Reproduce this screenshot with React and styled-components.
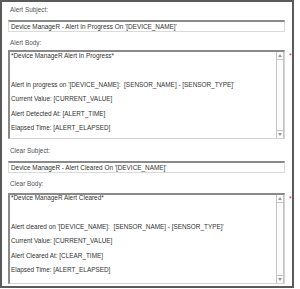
import React from "react";
import styled, { createGlobalStyle } from "styled-components";

const Global = createGlobalStyle`
  html, body { margin: 0; padding: 0; background: #fff; }
  body { font-family: "Liberation Sans", Arial, sans-serif; }
`;

const Frame = styled.div`
  box-sizing: border-box;
  width: 294px;
  height: 288px;
  border: 2px solid #5a5a5a;
  padding: 3px 0 0 6px;
  display: flex;
  flex-direction: column;
  background: #fff;
`;

const Label = styled.div`
  font-size: 6.4px;
  color: #555;
  line-height: 9px;
  height: 9px;
  padding-left: 2px;
  margin-bottom: ${(p) => p.$mb}px;
`;

const Row = styled.div`
  display: flex;
  align-items: flex-start;
  margin-bottom: ${(p) => p.$mb || 0}px;
`;

const Input = styled.div`
  box-sizing: border-box;
  width: 277px;
  height: 12px;
  border: 1px solid #dadada;
  border-top: 2px solid #8a8a8a;
  font-size: 6.4px;
  color: #333;
  line-height: 9px;
  padding-left: 2px;
  white-space: nowrap;
  overflow: hidden;
`;

const Area = styled.div`
  box-sizing: border-box;
  width: 277px;
  height: ${(p) => p.$h}px;
  border: 1px solid #d2d2d2;
  border-top: 2px solid #8a8a8a;
  border-left: 2px solid #8a8a8a;
  display: flex;
  overflow: hidden;
`;

const AreaText = styled.div`
  flex: 1;
  margin-top: ${(p) => p.$off}px;
  padding-left: 1px;
  font-size: 6.4px;
  color: #333;
  line-height: 14.4px;
  white-space: pre;
  overflow: hidden;
`;

const Scroll = styled.div`
  box-sizing: border-box;
  width: 8px;
  border-left: 1px solid #c4c4c4;
  border-right: 1px solid #c4c4c4;
  background: #fbfbfb;
  display: flex;
  flex-direction: column;
  justify-content: space-between;
`;

const Arrow = styled.div`
  height: 7px;
  border-bottom: ${(p) => (p.$down ? "none" : "1px solid #c4c4c4")};
  border-top: ${(p) => (p.$down ? "1px solid #c4c4c4" : "none")};
  display: flex;
  align-items: center;
  justify-content: center;
  svg { display: block; }
`;

const Star = styled.span`
  color: #d33;
  font-size: 7px;
  line-height: 7px;
  margin: 2px 0 0 4px;
`;

const Up = () => (
  <svg width="4" height="3" viewBox="0 0 4 3"><path d="M0 3 L2 0 L4 3 Z" fill="#999" /></svg>
);
const Down = () => (
  <svg width="4" height="3" viewBox="0 0 4 3"><path d="M0 0 L2 3 L4 0 Z" fill="#999" /></svg>
);

const Field = ({ h, off, text }) => (
  <Row>
    <Area $h={h}>
      <AreaText $off={off}>{text}</AreaText>
      <Scroll>
        <Arrow><Up /></Arrow>
        <Arrow $down><Down /></Arrow>
      </Scroll>
    </Area>
    <Star>*</Star>
  </Row>
);

const alertBody = `*Device ManageR Alert In Progress*

Alert in progress on '[DEVICE_NAME]:  [SENSOR_NAME] - [SENSOR_TYPE]'
Current Value: [CURRENT_VALUE]
Alert Detected At: [ALERT_TIME]
Elapsed Time: [ALERT_ELAPSED]`;

const clearBody = `*Device ManageR Alert Cleared*

Alert cleared on '[DEVICE_NAME]:  [SENSOR_NAME] - [SENSOR_TYPE]'
Current Value: [CURRENT_VALUE]
Alert Cleared At: [CLEAR_TIME]
Elapsed Time: [ALERT_ELAPSED]`;

export default function App() {
  return (
    <>
      <Global />
      <Frame>
        <Label $mb={6}>Alert Subject:</Label>
        <Row $mb={6}>
          <Input>Device ManageR - Alert In Progress On '[DEVICE_NAME]'</Input>
        </Row>
        <Label $mb={3}>Alert Body:</Label>
        <Row $mb={7}>
          <Field h={89} off={-3} text={alertBody} />
        </Row>
        <Label $mb={6}>Clear Subject:</Label>
        <Row $mb={6}>
          <Input>Device ManageR - Alert Cleared On '[DEVICE_NAME]'</Input>
        </Row>
        <Label $mb={5}>Clear Body:</Label>
        <Field h={91} off={-4} text={clearBody} />
      </Frame>
    </>
  );
}
